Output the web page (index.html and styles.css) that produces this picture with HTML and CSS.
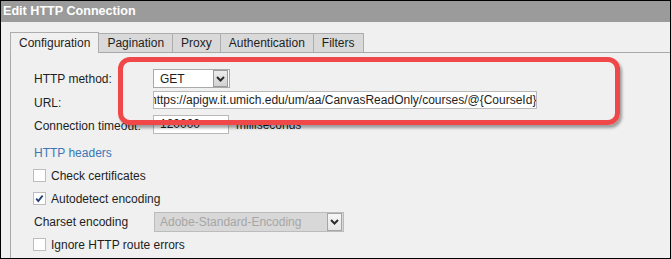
FILE: index.html
```html
<!DOCTYPE html>
<html>
<head>
<meta charset="utf-8">
<link rel="stylesheet" href="styles.css">
</head>
<body>
<div class="window">
  <div class="titlebar">Edit HTTP Connection</div>
  <div class="content">
    <div class="tabs">
      <div class="tab active">Configuration</div>
      <div class="tab">Pagination</div>
      <div class="tab">Proxy</div>
      <div class="tab">Authentication</div>
      <div class="tab">Filters</div>
    </div>
    <div class="panel">
      <div class="form">
        <div class="lbl">HTTP method:</div>
        <div class="select method">
          <span class="val">GET</span>
          <span class="dd"><svg width="9" height="6" viewBox="0 0 9 6"><path d="M1 1 L4.5 4.5 L8 1" fill="none" stroke="#2a2a2a" stroke-width="2"/></svg></span>
        </div>
        <div class="lbl lbl-url">URL:</div>
        <div class="input url"><span class="urltext">https://apigw.it.umich.edu/um/aa/CanvasReadOnly/courses/@{CourseId}</span><span class="caret"></span></div>
        <div class="lbl lbl-timeout">Connection timeout:</div>
        <div class="ctl">
          <div class="input timeout">120000</div>
          <span class="unit">milliseconds</span>
        </div>
      </div>
      <div class="section">HTTP headers</div>
      <div class="row">
        <span class="cb"></span><span>Check certificates</span>
      </div>
      <div class="row">
        <span class="cb"><svg width="11" height="11" viewBox="0 0 11 11"><path d="M2.2 5.6 L4.3 8 L8.6 2.6" fill="none" stroke="#1f3f75" stroke-width="1.8"/></svg></span><span>Autodetect encoding</span>
      </div>
      <div class="row">
        <span class="rowlbl">Charset encoding</span>
        <div class="select charset">
          <span class="val">Adobe-Standard-Encoding</span>
          <span class="dd"><svg width="9" height="6" viewBox="0 0 9 6"><path d="M1 1 L4.5 4.5 L8 1" fill="none" stroke="#2a2a2a" stroke-width="2"/></svg></span>
        </div>
      </div>
      <div class="row">
        <span class="cb"></span><span>Ignore HTTP route errors</span>
      </div>
    </div>
  </div>
  <div class="highlight"></div>
</div>
</body>
</html>
```
FILE: styles.css
```css
html, body {
  margin: 0;
  padding: 0;
  background: #ffffff;
}

.window {
  position: relative;
  width: 671px;
  height: 259px;
  box-sizing: border-box;
  border: 1px solid #000;
  background: #f0f0f0;
  overflow: hidden;
  font-family: "Liberation Sans", Arial, sans-serif;
  font-size: 12px;
  color: #1e1e1e;
  display: flex;
  flex-direction: column;
}

.titlebar {
  height: 21px;
  line-height: 21px;
  background: #9b9b9b;
  color: #ffffff;
  font-weight: bold;
  font-size: 12.6px;
  padding-left: 2px;
  flex: none;
}

.content {
  flex: 1;
  display: flex;
  flex-direction: column;
  padding: 10px 0 0 9px;
}

.tabs {
  display: flex;
  align-items: flex-end;
  height: 20px;
  flex: none;
}

.tab {
  height: 19px;
  line-height: 19px;
  box-sizing: border-box;
  padding: 0 8px;
  border: 1px solid #adadad;
  border-bottom: none;
  background: #d9d9d9;
  margin-left: -1px;
  white-space: nowrap;
}

.tab.active {
  margin-left: 0;
  height: 21px;
  line-height: 21px;
  margin-bottom: -1px;
  background: #f0f0f0;
  position: relative;
  z-index: 1;
}

.panel {
  flex: 1;
  border-top: 1px solid #a8a8a8;
  border-left: 1px solid #a8a8a8;
  padding: 14px 0 0 23px;
}

.form {
  display: grid;
  grid-template-columns: 119px auto;
  grid-auto-rows: 23px;
  align-items: center;
}

.lbl-url {
  padding-top: 2px;
}

.lbl-timeout {
  padding-top: 2px;
}

.select {
  position: relative;
  box-sizing: border-box;
  height: 19px;
  border: 1px solid #a9a9a9;
  background: #ffffff;
  display: flex;
  align-items: center;
  justify-content: space-between;
}

.select .val {
  padding-left: 6px;
}

.select .dd {
  box-sizing: border-box;
  width: 15px;
  height: 17px;
  margin-right: 1px;
  border: 1px solid #9a9a9a;
  background: linear-gradient(#ececec, #d2d2d2);
  display: flex;
  align-items: center;
  justify-content: center;
}

.method {
  width: 77px;
}

.input {
  box-sizing: border-box;
  border: 1px solid #b9b9b9;
  background: #ffffff;
  height: 19px;
  line-height: 17px;
  overflow: hidden;
  white-space: nowrap;
}

.url {
  width: 384px;
  height: 18px;
  line-height: 16px;
  align-self: start;
  margin-top: 1px;
  display: flex;
  align-items: center;
}

.urltext {
  margin-left: -4px;
}

.caret {
  display: inline-block;
  width: 1px;
  height: 14px;
  background: #1e1e1e;
  margin-left: 1px;
}

.ctl {
  display: flex;
  align-items: center;
}

.timeout {
  width: 76px;
  padding-left: 6px;
}

.unit {
  margin-left: 7px;
}

.section {
  margin-top: 6px;
  height: 22px;
  line-height: 22px;
  color: #3a78b5;
}

.row {
  height: 23px;
  display: flex;
  align-items: center;
}

.cb {
  box-sizing: border-box;
  width: 13px;
  height: 13px;
  border: 1px solid #bdbdbd;
  background: #ffffff;
  margin-left: -1px;
  margin-right: 5px;
  display: flex;
  align-items: center;
  justify-content: center;
}

.rowlbl {
  width: 120px;
}

.charset {
  width: 190px;
  height: 20px;
  background: #d8d8d8;
  border-color: #bcbcbc;
  color: #a6a6a6;
}

.charset .val {
  padding-left: 5px;
}

.charset .dd {
  height: 18px;
  background: linear-gradient(#f6f6f6, #e4e4e4);
  border-color: #a5a5a5;
}

.highlight {
  position: absolute;
  left: 117px;
  top: 56px;
  width: 502px;
  height: 68px;
  box-sizing: border-box;
  border: 5px solid #f04848;
  border-radius: 12px;
  box-shadow: 2px 3px 3px rgba(0, 0, 0, 0.35);
}
```
